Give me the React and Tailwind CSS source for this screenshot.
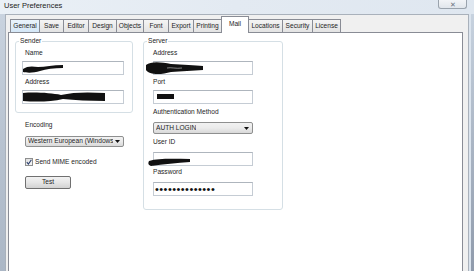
import React from 'react'

const tabs = [
  { label: 'General', w: 'w-[30px]', hover: true },
  { label: 'Save', w: 'w-[25px]' },
  { label: 'Editor', w: 'w-[26px]' },
  { label: 'Design', w: 'w-[29px]' },
  { label: 'Objects', w: 'w-[28px]' },
  { label: 'Font', w: 'w-[26px]' },
  { label: 'Export', w: 'w-[26px]' },
  { label: 'Printing', w: 'w-[29px]' },
  { label: 'Mail', w: 'w-[28px]', active: true },
  { label: 'Locations', w: 'w-[35px]' },
  { label: 'Security', w: 'w-[31px]' },
  { label: 'License', w: 'w-[29px]' },
]

function Tab({ tab, first }) {
  if (tab.active) {
    return (
      <div className={`${tab.w} h-[17px] -mb-px -ml-px relative z-10 bg-white border-l border-t border-r border-[#898c95] flex items-start justify-center pt-[3px] leading-[8px]`}>
        {tab.label}
      </div>
    )
  }
  return (
    <div
      className={`${tab.w} h-[13px] ${first ? '' : '-ml-px'} border-l border-t border-r border-[#898c95] flex items-center justify-center leading-[8px] ${
        tab.hover ? 'bg-gradient-to-b from-[#eaf4fc] to-[#d4e7f7]' : 'bg-gradient-to-b from-[#f4f4f4] to-[#e3e3e3]'
      }`}
    >
      {tab.label}
    </div>
  )
}

function TextBox({ className = '', children }) {
  return (
    <div className={`relative w-[100px] h-[14px] bg-white border border-[#c5ccd4] border-t-[#aeb5bd] ${className}`}>
      {children}
    </div>
  )
}

function Combo({ className = '', children }) {
  return (
    <div className={`flex items-center justify-between pl-[2px] pr-[3px] border border-[#8e8f8f] rounded-[2px] bg-gradient-to-b from-[#f2f2f2] via-[#ebebeb] to-[#d9d9d9] leading-none ${className}`}>
      <span className="whitespace-nowrap overflow-hidden">{children}</span>
      <svg width="5" height="3" viewBox="0 0 5 3" className="shrink-0 ml-[2px]">
        <path d="M0 0 H5 L2.5 3 Z" fill="#111" />
      </svg>
    </div>
  )
}

export default function App() {
  return (
    <div className="w-[474px] h-[271px] overflow-hidden flex flex-col bg-[#dfe7f0] font-['Liberation_Sans',Arial,sans-serif] text-[#1e1e1e]">
      {/* title bar */}
      <div className="h-[14px] shrink-0 flex items-start justify-between pl-[4px] pr-[7px] bg-gradient-to-r from-[#eaf0f6] via-[#e3eaf2] to-[#dfe7f0]">
        <span className="text-[7.5px] leading-[9px] mt-[1px] text-[#222]">User Preferences</span>
        <div className="w-[29px] h-[9px] border border-t-0 border-[#9aa3ad] rounded-b-[3px] bg-gradient-to-b from-[#f2f4f7] to-[#e1e6ec] flex items-center justify-center">
          <span className="text-[7px] leading-none text-[#6c7480]">✕</span>
        </div>
      </div>

      <div className="flex">
        <div className="w-[5px] shrink-0 bg-gradient-to-b from-[#c9d3df] via-[#b7c2d0] to-[#aab6c5]" />

        {/* client area */}
        <div className="w-[464px] shrink-0 border-l border-t border-r border-[#a9b1bb] bg-[#f0f0f0] pl-[2px] pr-[5px] text-[6.6px]">
          <div className="h-[16px] mt-[1px] flex items-end pl-[2px]">
            {tabs.map((t, i) => (
              <Tab key={t.label} tab={t} first={i === 0} />
            ))}
          </div>

          {/* tab panel */}
          <div className="h-[250px] border border-[#898c95] bg-white flex items-start">
            {/* left column */}
            <div className="ml-[6px] w-[118px] flex flex-col">
              <fieldset className="mt-[4px] w-[118px] border border-[#d5dfe5] rounded-[3px] pl-[3px] pb-[8px]">
                <legend className="px-[1px] leading-[8px]">Sender</legend>
                <div className="mt-[4px] ml-[6px] leading-[8px]">Name</div>
                <TextBox className="mt-[4px] ml-[3px] w-[102px]">
                  <svg width="40" height="12" viewBox="0 0 40 12" className="absolute left-0 top-[1px]">
                    <path d="M0 6 C4 3 9 3 15 4 C22 4 30 2 40 2 L40 5 C31 5 23 6 17 8 C11 10 4 10 0 9 Z" fill="#111" />
                  </svg>
                </TextBox>
                <div className="mt-[3px] ml-[6px] leading-[8px]">Address</div>
                <TextBox className="mt-[4px] ml-[3px] w-[102px]">
                  <svg width="82" height="12" viewBox="0 0 82 12" className="absolute left-0 top-0">
                    <path d="M0 2 C12 1 28 2 38 4 C50 1 66 1 82 2 L82 10 C66 10 52 9 40 8 C28 11 12 11 0 10 Z" fill="#111" />
                  </svg>
                </TextBox>
              </fieldset>

              <div className="mt-[8px] ml-[10px] leading-[8px]">Encoding</div>
              <Combo className="mt-[7px] ml-[10px] w-[99px] h-[11px]">Western European (Windows</Combo>

              <div className="mt-[11px] ml-[10px] flex items-center gap-[2px] leading-[8px]">
                <div className="w-[8px] h-[8px] border border-[#8e8f8f] bg-gradient-to-br from-[#dedede] to-[#f8f8f8] flex items-center justify-center">
                  <svg width="6" height="6" viewBox="0 0 6 6">
                    <path d="M0.8 3.2 L2.4 5 L5.4 0.8" stroke="#2b3f6e" strokeWidth="1.1" fill="none" />
                  </svg>
                </div>
                <span>Send MIME encoded</span>
              </div>

              <button className="mt-[10px] ml-[10px] w-[46px] h-[13px] border border-[#707070] rounded-[2px] bg-gradient-to-b from-[#f2f2f2] via-[#e6e6e6] to-[#d2d2d2] flex items-center justify-center leading-none">
                Test
              </button>
            </div>

            {/* server */}
            <fieldset className="mt-[4px] ml-[10px] w-[140px] border border-[#d5dfe5] rounded-[3px] pl-[3px] pb-[13px]">
              <legend className="px-[1px] leading-[8px]">Server</legend>
              <div className="mt-[4px] ml-[6px] leading-[8px]">Address</div>
              <TextBox className="mt-[4px] ml-[6px]">
                <svg width="58" height="14" viewBox="0 0 58 14" className="absolute left-[-8px] top-[-1px] overflow-visible">
                  <path d="M0 4 C5 0 15 1 25 3 C37 4 49 4 57 5 L57 9 C47 10 35 10 25 11 C15 14 3 14 0 9 Z" fill="#111" />
                  <path d="M21 7 C25 6 30 8 36 7" stroke="#cfcfcf" strokeWidth="0.6" fill="none" />
                </svg>
              </TextBox>
              <div className="mt-[3px] ml-[6px] leading-[8px]">Port</div>
              <TextBox className="mt-[4px] ml-[6px]">
                <div className="absolute left-[3px] top-[3px] w-[17px] h-[5px] bg-[#111]" />
              </TextBox>
              <div className="mt-[4px] ml-[6px] leading-[8px]">Authentication Method</div>
              <Combo className="mt-[6px] ml-[6px] w-[100px] h-[12px]">AUTH LOGIN</Combo>
              <div className="mt-[4px] ml-[6px] leading-[8px]">User ID</div>
              <TextBox className="mt-[6px] ml-[6px]">
                <svg width="42" height="10" viewBox="0 0 42 10" className="absolute left-[-6px] top-[3px]">
                  <path d="M1 5 C11 2 26 3 42 3 L42 6 C29 7 15 8 3 10 C0 9 0 7 1 5 Z" fill="#111" />
                </svg>
              </TextBox>
              <div className="mt-[2px] ml-[6px] leading-[8px]">Password</div>
              <TextBox className="mt-[6px] ml-[6px] flex items-center pl-[1px]">
                <span className="text-[11px] leading-none tracking-[0.45px] text-[#111]">••••••••••••••</span>
              </TextBox>
            </fieldset>
          </div>
        </div>

        <div className="w-[5px] shrink-0 border-l-2 border-[#dbe4ee] bg-gradient-to-b from-[#c7d2df] via-[#a9b4c3] to-[#8e99aa]" />
      </div>
    </div>
  )
}
